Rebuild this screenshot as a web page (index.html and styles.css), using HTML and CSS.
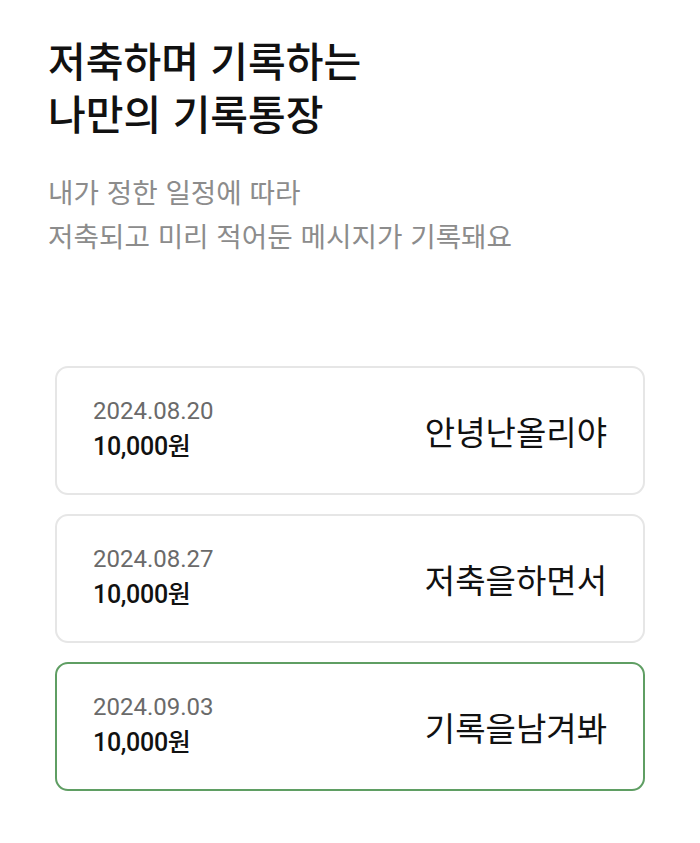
FILE: index.html
```html
<!DOCTYPE html>
<html lang="ko">
<head>
    <meta charset="UTF-8">
    <title>기록통장</title>
    <meta name="viewport" content="width=device-width, initial-scale=1.0">
    <link rel="stylesheet" href="styles.css">
</head>
<body>
    <main class="app">
        <header class="intro">
            <h1 class="title">
                <span class="title-line">저축하며 기록하는</span>
                <span class="title-line">나만의 기록통장</span>
            </h1>
            <p class="desc">내가 정한 일정에 따라<br>저축되고 미리 적어둔 메시지가 기록돼요</p>
        </header>

        <section class="list">
            <div class="card">
                <div class="card-info">
                    <span class="card-date">2024.08.20</span>
                    <span class="card-amount">10,000원</span>
                </div>
                <div class="card-msg">안녕난올리야</div>
            </div>
            <div class="card">
                <div class="card-info">
                    <span class="card-date">2024.08.27</span>
                    <span class="card-amount">10,000원</span>
                </div>
                <div class="card-msg">저축을하면서</div>
            </div>
            <div class="card card--active">
                <div class="card-info">
                    <span class="card-date">2024.09.03</span>
                    <span class="card-amount">10,000원</span>
                </div>
                <div class="card-msg">기록을남겨봐</div>
            </div>
        </section>
    </main>
</body>
</html>
```

FILE: styles.css
```css
body {
    margin: 0;
    background: #fff;
    font-family: "Noto Sans CJK KR", "Noto Sans", sans-serif;
    color: #111;
}

.app {
    width: 700px;
    min-height: 843px;
}

.intro {
    padding: 33px 48px 0;
}

.title {
    margin: 0;
    display: flex;
    flex-direction: column;
    font-size: 41px;
    font-weight: 500;
    line-height: 53px;
    color: #111;
}

.title-line {
    display: block;
}

.desc {
    margin: 30px 0 0;
    font-size: 27.7px;
    font-weight: 400;
    line-height: 44px;
    color: #8c8c8c;
}

.list {
    display: flex;
    flex-direction: column;
    gap: 19px;
    padding: 109px 55px 0;
}

.card {
    display: flex;
    align-items: center;
    justify-content: space-between;
    height: 125px;
    padding: 0 36px;
    border: 2px solid #e6e6e6;
    border-radius: 13px;
}

.card--active {
    border-color: #5f9e63;
}

.card-info {
    display: flex;
    flex-direction: column;
    gap: 6px;
    margin-top: -4px;
}

.card-date {
    font-family: Roboto, "Noto Sans", sans-serif;
    font-size: 24px;
    line-height: 30px;
    color: #6a6a6a;
}

.card-amount {
    font-family: Roboto, "Noto Sans CJK KR", sans-serif;
    font-size: 25px;
    font-weight: 500;
    line-height: 30px;
    letter-spacing: -0.3px;
    color: #111;
}

.card-msg {
    font-size: 33px;
    font-weight: 400;
    color: #111;
}
```
